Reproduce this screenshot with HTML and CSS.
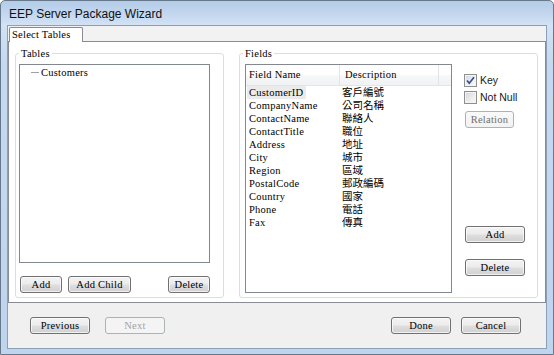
FILE: index.html
```html
<!DOCTYPE html>
<html>
<head>
<meta charset="utf-8">
<link rel="stylesheet" href="styles.css">
</head>
<body>
<div class="window">
  <div class="titlebar">EEP Server Package Wizard</div>
  <div class="client">
    <div class="tabstrip"><div class="tab">Select Tables</div></div>
    <div class="tabpage">
      <div class="group tables">
        <div class="group-label">Tables</div>
        <div class="tree">
          <div class="tree-item"><span class="tree-line"></span>Customers</div>
        </div>
        <div class="btn-row">
          <button class="btn w-add">Add</button>
          <button class="btn w-addchild">Add Child</button>
          <button class="btn w-add push">Delete</button>
        </div>
      </div>
      <div class="group fields">
        <div class="group-label">Fields</div>
        <div class="fields-body">
          <div class="listview">
            <div class="lv-header">
              <div class="hc c1">Field Name</div>
              <div class="hc c2">Description</div>
              <div class="hc c3"></div>
            </div>
            <div class="lv-row"><div class="rc c1"><span class="sel">CustomerID</span></div><div class="rc c2">客戶編號</div></div>
            <div class="lv-row"><div class="rc c1"><span>CompanyName</span></div><div class="rc c2">公司名稱</div></div>
            <div class="lv-row"><div class="rc c1"><span>ContactName</span></div><div class="rc c2">聯絡人</div></div>
            <div class="lv-row"><div class="rc c1"><span>ContactTitle</span></div><div class="rc c2">職位</div></div>
            <div class="lv-row"><div class="rc c1"><span>Address</span></div><div class="rc c2">地址</div></div>
            <div class="lv-row"><div class="rc c1"><span>City</span></div><div class="rc c2">城市</div></div>
            <div class="lv-row"><div class="rc c1"><span>Region</span></div><div class="rc c2">區域</div></div>
            <div class="lv-row"><div class="rc c1"><span>PostalCode</span></div><div class="rc c2">郵政編碼</div></div>
            <div class="lv-row"><div class="rc c1"><span>Country</span></div><div class="rc c2">國家</div></div>
            <div class="lv-row"><div class="rc c1"><span>Phone</span></div><div class="rc c2">電話</div></div>
            <div class="lv-row"><div class="rc c1"><span>Fax</span></div><div class="rc c2">傳真</div></div>
          </div>
          <div class="side">
            <div class="chk-row">
              <span class="chk checked"><svg width="11" height="11" viewBox="0 0 11 11"><path d="M2 5.5 L4.3 8.2 L9 2.3" fill="none" stroke="#3b4f86" stroke-width="1.7"/></svg></span>
              <span class="chk-label">Key</span>
            </div>
            <div class="chk-row second">
              <span class="chk"></span>
              <span class="chk-label">Not Null</span>
            </div>
            <button class="btn relation" disabled>Relation</button>
            <button class="btn side-btn side-add">Add</button>
            <button class="btn side-btn side-del">Delete</button>
          </div>
        </div>
      </div>
    </div>
    <div class="footer">
      <button class="btn w-nav">Previous</button>
      <button class="btn w-nav next" disabled>Next</button>
      <button class="btn w-nav done">Done</button>
      <button class="btn w-nav cancel">Cancel</button>
    </div>
  </div>
</div>
</body>
</html>
```

FILE: styles.css
```css
html, body {
  margin: 0;
  padding: 0;
  background: #ffffff;
}

.window {
  width: 554px;
  height: 355px;
  box-sizing: border-box;
  border: 1px solid #66788c;
  border-radius: 5px 5px 0 0;
  background: linear-gradient(#b5cce8 0px, #c4d8ef 14px, #d3e2f4 24px, #c6d9ef 60px, #bfd4ed 355px);
  padding: 0 6px 5px 6px;
  display: flex;
  flex-direction: column;
}

.titlebar {
  height: 24px;
  line-height: 26px;
  padding-left: 2px;
  font-family: "Liberation Sans", Arial, sans-serif;
  font-size: 12px;
  color: #111;
  white-space: nowrap;
}

.client {
  flex: 1;
  border: 1px solid #8aa0b9;
  background: #f0f0f0;
  display: flex;
  flex-direction: column;
  font-family: "Liberation Serif", "Noto Sans CJK TC", serif;
  font-size: 10.5px;
  letter-spacing: 0.25px;
  color: #000;
}

.tabstrip {
  height: 15px;
  display: flex;
  align-items: flex-end;
  padding-left: 1px;
  background: #f2f2f2;
}

.tab {
  position: relative;
  z-index: 1;
  box-sizing: border-box;
  width: 74px;
  height: 15px;
  margin-bottom: -1px;
  border: 1px solid #898c95;
  border-bottom: none;
  border-radius: 2px 2px 0 0;
  background: #ffffff;
  line-height: 13px;
  padding-left: 2px;
  white-space: nowrap;
}

.tabpage {
  box-sizing: border-box;
  height: 262px;
  border: 1px solid #898c95;
  background: #ffffff;
  display: flex;
  align-items: flex-start;
  padding: 11px 6px 0 6px;
  gap: 15px;
}

.group {
  box-sizing: border-box;
  height: 245px;
  border: 1px solid #d5dfe5;
  border-radius: 3px;
}

.tables {
  width: 209px;
}

.fields {
  width: 299px;
}

.group-label {
  display: table;
  margin: -7px 0 0 3px;
  padding: 0 2px;
  height: 13px;
  line-height: 13px;
  background: #ffffff;
}

.tree {
  box-sizing: border-box;
  width: 191px;
  height: 199px;
  margin: 4px 0 0 3px;
  border: 1px solid #828790;
  background: #fff;
}

.tree-item {
  display: flex;
  align-items: center;
  height: 13px;
  line-height: 13px;
  margin-top: 1px;
  padding-left: 11px;
}

.tree-line {
  width: 8px;
  height: 0;
  border-top: 1px solid #a0a0a0;
  margin-right: 2px;
}

.btn-row {
  display: flex;
  width: 190px;
  margin: 13px 0 0 4px;
}

.btn {
  box-sizing: border-box;
  height: 17px;
  padding: 0;
  border: 1px solid #707070;
  border-radius: 3px;
  background: linear-gradient(#f3f3f3, #ececec 45%, #dedede 55%, #d0d0d0);
  box-shadow: inset 0 0 0 1px rgba(255, 255, 255, 0.7);
  font-family: "Liberation Serif", serif;
  font-size: 10.5px;
  letter-spacing: 0.25px;
  line-height: 15px;
  color: #000;
  white-space: nowrap;
}

.btn:disabled {
  border-color: #adb2b5;
  background: #f4f4f4;
  box-shadow: none;
  color: #a3a3a3;
}

.w-add {
  width: 42px;
}

.w-addchild {
  width: 63px;
  margin-left: 6px;
}

.push {
  margin-left: auto;
}

.fields-body {
  display: flex;
  margin-top: 4px;
  padding-left: 5px;
}

.listview {
  box-sizing: border-box;
  width: 207px;
  height: 229px;
  border: 1px solid #828790;
  background: #fff;
}

.lv-header {
  display: grid;
  grid-template-columns: 94px 99px 1fr;
  box-sizing: border-box;
  height: 21px;
  border-bottom: 1px solid #e5e5e5;
  background: linear-gradient(#ffffff, #ffffff 50%, #f7f8fa 50%, #f1f2f4);
}

.hc {
  line-height: 20px;
  border-right: 1px solid #e3e4e6;
  white-space: nowrap;
}

.hc.c1 {
  padding-left: 3px;
}

.hc.c2 {
  padding-left: 5px;
}

.hc.c3 {
  border-right: none;
}

.lv-row {
  display: grid;
  grid-template-columns: 94px 1fr;
  height: 13px;
  line-height: 13px;
  white-space: nowrap;
}

.rc.c1 span {
  display: inline-block;
  margin-left: 1px;
  padding: 0 2px;
}

.rc.c1 .sel {
  background: #ebebeb;
  padding-right: 3px;
}

.rc.c2 {
  padding-left: 2px;
  letter-spacing: 0;
}

.side {
  display: flex;
  flex-direction: column;
  align-items: flex-start;
  margin-left: 12px;
  padding-top: 9px;
}

.chk-row {
  display: flex;
  align-items: center;
  height: 14px;
  gap: 3px;
}

.chk-row.second {
  margin-top: 3px;
}

.chk {
  box-sizing: border-box;
  width: 13px;
  height: 13px;
  border: 1px solid #8e8f8f;
  background: linear-gradient(135deg, #d2d5da, #eeeeee 60%, #f8f8f8);
  box-shadow: inset 0 0 0 1px #f4f4f4;
  display: flex;
  align-items: center;
  justify-content: center;
}

.chk.checked {
  background: linear-gradient(135deg, #cdd4e6, #eef1f7 60%, #f8f9fc);
}

.chk-label {
  font-family: "Liberation Sans", Arial, sans-serif;
  font-size: 10.5px;
  letter-spacing: 0;
  color: #1a1a1a;
}

.relation {
  width: 49px;
  margin: 7px 0 0 1px;
}

.btn.relation:disabled {
  color: #707070;
  background: linear-gradient(#fafafa, #f2f2f2);
}

.side-btn {
  width: 60px;
  margin-left: 1px;
}

.side-add {
  margin-top: 98px;
}

.side-del {
  margin-top: 16px;
}

.footer {
  display: flex;
  flex: 1;
  align-items: flex-start;
  padding: 14px 25px 0 22px;
}

.w-nav {
  width: 60px;
}

.next {
  margin-left: 15px;
}

.done {
  margin-left: auto;
}

.cancel {
  margin-left: 10px;
}
```
